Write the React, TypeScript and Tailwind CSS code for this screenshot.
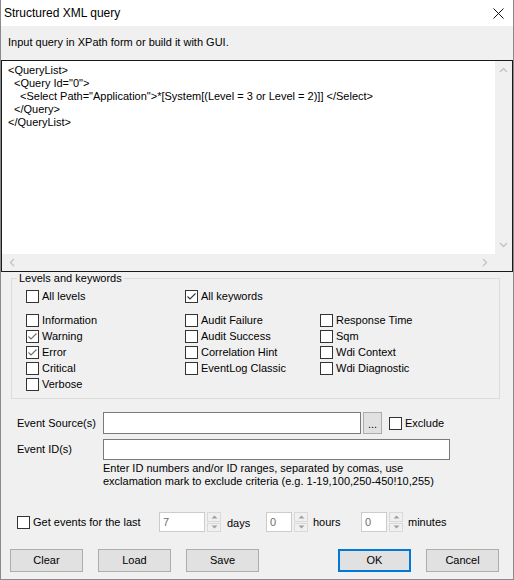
import React from 'react';

const font = { fontFamily: '"Liberation Sans", Arial, sans-serif' };

function Check({ color = '#333333' }: { color?: string }) {
    return (
        <svg width="11" height="11" viewBox="0 0 11 11">
            <path d="M1.5 5.5 L4 8 L9.5 2.5" fill="none" stroke={color} strokeWidth="1.1" />
        </svg>
    );
}

function CheckBox({ label, checked, dim }: { label: string; checked?: boolean; dim?: boolean }) {
    return (
        <div className="flex h-[16px] items-center gap-[3px]">
            <div className="flex h-[13px] w-[13px] shrink-0 items-center justify-center border border-[#333333] bg-white">
                {checked && <Check color={dim ? '#6d6d6d' : '#333333'} />}
            </div>
            <span className="whitespace-nowrap">{label}</span>
        </div>
    );
}

function Chevron({ dir }: { dir: 'up' | 'down' | 'left' | 'right' }) {
    const d = {
        up: 'M1 6 L4.5 2.5 L8 6',
        down: 'M1 3 L4.5 6.5 L8 3',
        left: 'M6 1 L2.5 4.5 L6 8',
        right: 'M3 1 L6.5 4.5 L3 8',
    }[dir];
    return (
        <svg width="9" height="9" viewBox="0 0 9 9">
            <path d={d} fill="none" stroke="#c2c2c2" strokeWidth="1.3" />
        </svg>
    );
}

function Spinner({ value, width }: { value: string; width: string }) {
    return (
        <div className="flex items-center gap-[2px]">
            <div className={`flex h-[20px] ${width} items-center border border-[#cccccc] bg-white pl-[3px] text-[#6d6d6d]`}>
                {value}
            </div>
            <div className="flex h-[20px] w-[14px] flex-col gap-[1px]">
                <div className="flex flex-1 items-center justify-center border border-[#d9d9d9] bg-[#f0f0f0]">
                    <svg width="7" height="4" viewBox="0 0 7 4"><path d="M0.5 3.5 L3.5 0.5 L6.5 3.5 Z" fill="#a0a0a0" /></svg>
                </div>
                <div className="flex flex-1 items-center justify-center border border-[#d9d9d9] bg-[#f0f0f0]">
                    <svg width="7" height="4" viewBox="0 0 7 4"><path d="M0.5 0.5 L3.5 3.5 L6.5 0.5 Z" fill="#a0a0a0" /></svg>
                </div>
            </div>
        </div>
    );
}

function Button({ label, primary }: { label: string; primary?: boolean }) {
    return (
        <div
            className={`flex h-[23px] w-[73px] items-center justify-center bg-[#e1e1e1] ${
                primary ? 'border-2 border-[#0078d7]' : 'border border-[#adadad]'
            }`}
        >
            {label}
        </div>
    );
}

export default function App() {
    const levels = [
        { label: 'Information' },
        { label: 'Warning', checked: true },
        { label: 'Error', checked: true },
        { label: 'Critical' },
        { label: 'Verbose' },
    ];
    const audits = ['Audit Failure', 'Audit Success', 'Correlation Hint', 'EventLog Classic'];
    const misc = ['Response Time', 'Sqm', 'Wdi Context', 'Wdi Diagnostic'];

    return (
        <div style={font} className="flex h-[580px] w-[514px] flex-col border-x border-b border-[#8a8a8a] text-[11px] leading-[13px] text-black">
            {/* title bar */}
            <div className="flex h-[26px] shrink-0 items-center justify-between bg-white pl-[3px] pr-[9px] text-[12px]">
                <span>Structured XML query</span>
                <svg width="11" height="11" viewBox="0 0 11 11">
                    <path d="M0.5 0.5 L10.5 10.5 M10.5 0.5 L0.5 10.5" stroke="#111" strokeWidth="1" />
                </svg>
            </div>

            <div className="flex flex-1 flex-col bg-[#f0f0f0]">
                <div className="flex h-[34px] items-center pb-[2px] pl-[7px]">Input query in XPath form or build it with GUI.</div>

                {/* query editor */}
                <div className="flex h-[212px] flex-col border border-[#1a1a1a] bg-white">
                    <div className="flex flex-1">
                        <div className="flex-1 pl-[6px] pt-[3px]">
                            <div>&lt;QueryList&gt;</div>
                            <div className="pl-[6px]">&lt;Query Id="0"&gt;</div>
                            <div className="pl-[12px]">&lt;Select Path="Application"&gt;*[System[(Level = 3 or Level = 2)]] &lt;/Select&gt;</div>
                            <div className="pl-[6px]">&lt;/Query&gt;</div>
                            <div>&lt;/QueryList&gt;</div>
                        </div>
                        <div className="flex w-[17px] flex-col items-center justify-between bg-[#f0f0f0] py-[5px]">
                            <Chevron dir="up" />
                            <Chevron dir="down" />
                        </div>
                    </div>
                    <div className="flex h-[17px] items-center bg-[#f0f0f0]">
                        <div className="flex flex-1 items-center justify-between px-[6px]">
                            <Chevron dir="left" />
                            <Chevron dir="right" />
                        </div>
                        <div className="w-[17px]" />
                    </div>
                </div>

                {/* levels and keywords group */}
                <div className="relative ml-[10px] mt-[6px] h-[121px] w-[489px] border border-[#dcdcdc] pl-[14px] pt-[9px]">
                    <span className="absolute -top-[7px] left-[5px] bg-[#f0f0f0] px-[2px]">Levels and keywords</span>
                    <div className="flex">
                        <div className="w-[159px]"><CheckBox label="All levels" /></div>
                        <CheckBox label="All keywords" checked />
                    </div>
                    <div className="mt-[8px] flex">
                        <div className="flex w-[159px] flex-col">
                            {levels.map(l => <CheckBox key={l.label} label={l.label} checked={l.checked} dim />)}
                        </div>
                        <div className="flex w-[135px] flex-col">
                            {audits.map(a => <CheckBox key={a} label={a} />)}
                        </div>
                        <div className="flex flex-col">
                            {misc.map(m => <CheckBox key={m} label={m} />)}
                        </div>
                    </div>
                </div>

                {/* event source / ids */}
                <div className="mt-[13px] flex h-[22px] items-center pl-[16px]">
                    <span className="w-[86px]">Event Source(s)</span>
                    <div className="h-[22px] w-[258px] border border-[#7a7a7a] bg-white" />
                    <div className="ml-[2px] flex h-[22px] w-[19px] items-center justify-center border border-[#adadad] bg-[#e1e1e1] pt-[3px]">...</div>
                    <div className="ml-[7px]"><CheckBox label="Exclude" /></div>
                </div>
                <div className="mt-[5px] flex h-[21px] items-center pl-[16px]">
                    <span className="w-[86px]">Event ID(s)</span>
                    <div className="h-[21px] w-[347px] border border-[#7a7a7a] bg-white" />
                </div>
                <div className="mt-[2px] pl-[102px]">
                    <div>Enter ID numbers and/or ID ranges, separated by comas, use</div>
                    <div>exclamation mark to exclude criteria (e.g. 1-19,100,250-450!10,255)</div>
                </div>

                {/* time range */}
                <div className="mt-[24px] flex h-[20px] items-center pl-[16px]">
                    <div className="w-[142px]"><CheckBox label="Get events for the last" /></div>
                    <Spinner value="7" width="w-[46px]" />
                    <span className="ml-[6px] w-[39px] pt-[2px]">days</span>
                    <Spinner value="0" width="w-[26px]" />
                    <span className="ml-[5px] w-[48px]">hours</span>
                    <Spinner value="0" width="w-[26px]" />
                    <span className="ml-[5px]">minutes</span>
                </div>

                {/* buttons */}
                <div className="mt-[17px] flex pl-[9px]">
                    <div className="flex gap-[15px]">
                        <Button label="Clear" />
                        <Button label="Load" />
                        <Button label="Save" />
                    </div>
                    <div className="ml-[79px] flex gap-[15px]">
                        <Button label="OK" primary />
                        <Button label="Cancel" />
                    </div>
                </div>
            </div>
        </div>
    );
}
